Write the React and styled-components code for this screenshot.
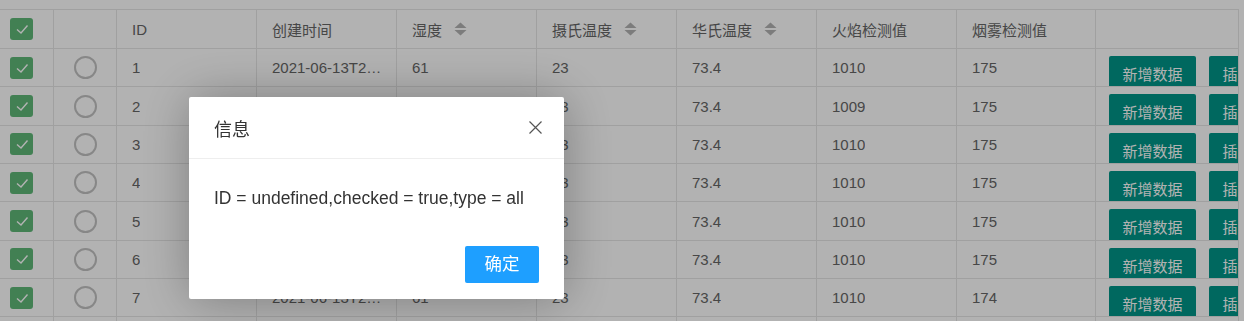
import React from "react";
import styled, {createGlobalStyle} from "styled-components";

const GlobalStyle = createGlobalStyle`
  html, body {
    margin: 0;
    padding: 0;
    background: #fff;
    overflow: hidden;
  }
  body {
    font-family: "Liberation Sans", "Noto Sans CJK SC", sans-serif;
  }
`

const columns = [
  {key: "id", title: "ID"},
  {key: "time", title: "创建时间", tight: true},
  {key: "hum", title: "湿度", sort: true},
  {key: "c", title: "摄氏温度", sort: true},
  {key: "f", title: "华氏温度", sort: true},
  {key: "fire", title: "火焰检测值"},
  {key: "smoke", title: "烟雾检测值"},
]

const fire = [1010, 1009, 1010, 1010, 1010, 1010, 1010, 1010]
const smoke = [175, 175, 175, 175, 175, 175, 174, 175]

const rows = fire.map((v, i) => ({
  id: i + 1,
  time: "2021-06-13T20:15:32",
  hum: 61,
  c: 23,
  f: 73.4,
  fire: v,
  smoke: smoke[i],
}))

const GRID = "54px 63px 140px 140px 140px 140px 140px 140px 139px 1fr"

const App = () => {
  return (
    <>
      <GlobalStyle/>
      <Page>
        <TableWrap>
          <Row header>
            <Cell center><CheckBox/></Cell>
            <Cell/>
            {columns.map(col => (
              <Cell key={col.key}>
                <span>{col.title}</span>
                {col.sort && <SortIcon/>}
              </Cell>
            ))}
            <Cell last/>
          </Row>
          {rows.map(row => (
            <Row key={row.id}>
              <Cell center><CheckBox/></Cell>
              <Cell center><Radio/></Cell>
              {columns.map(col => (
                <Cell key={col.key} tight={col.tight}><Ellipsis>{row[col.key]}</Ellipsis></Cell>
              ))}
              <ActionCell>
                <ActionBtn>新增数据</ActionBtn>
                <ActionBtn>插入数据</ActionBtn>
              </ActionCell>
            </Row>
          ))}
        </TableWrap>
      </Page>
      <Shade/>
      <Dialog>
        <DialogTitle>
          <span>信息</span>
          <Close>
            <svg width="13" height="13" viewBox="0 0 13 13">
              <path d="M0.5 0.5 L12.5 12.5 M12.5 0.5 L0.5 12.5" stroke="#555" strokeWidth="1.2" fill="none"/>
            </svg>
          </Close>
        </DialogTitle>
        <DialogBody>ID = undefined,checked = true,type = all</DialogBody>
        <DialogFooter>
          <OkBtn>确定</OkBtn>
        </DialogFooter>
      </Dialog>
    </>
  )
}

const CheckBox = () => (
  <Check>
    <svg width="22" height="22" viewBox="0 0 22 22">
      <path d="M6 11.5 L10 15 L16.5 7.5" stroke="#fff" strokeWidth="1.4" fill="none"/>
    </svg>
  </Check>
)

const SortIcon = () => (
  <Sort width="13" height="14" viewBox="0 0 13 14">
    <path d="M6.5 0.5 L12.5 6 L0.5 6 Z" fill="#b2b2b2"/>
    <path d="M0.5 8 L12.5 8 L6.5 13.5 Z" fill="#b2b2b2"/>
  </Sort>
)

const Page = styled.div`
  padding-top: 9px;
  width: 1244px;
  height: 321px;
  box-sizing: border-box;
  overflow: hidden;
`

const TableWrap = styled.div`
  width: 1239px;
  border-top: 1px solid #e6e6e6;
  border-right: 1px solid #e6e6e6;
  box-sizing: border-box;
  overflow: hidden;
`

const Row = styled.div`
  display: grid;
  grid-template-columns: ${GRID};
  height: ${p => (p.header ? "39px" : "38.35px")};
  border-bottom: 1px solid #e6e6e6;
  box-sizing: border-box;
  color: #666;
  font-size: 15px;
`

const Cell = styled.div`
  display: flex;
  align-items: center;
  justify-content: ${p => (p.center ? "center" : "flex-start")};
  padding: ${p => (p.center ? "0" : p.tight ? "0 9px 0 15px" : "0 15px")};
  border-right: ${p => (p.last ? "none" : "1px solid #e6e6e6")};
  box-sizing: border-box;
  min-width: 0;
  overflow: hidden;
  white-space: nowrap;
  &:first-child {
    justify-content: flex-start;
    padding-left: 10px;
  }
`

const Ellipsis = styled.span`
  display: block;
  overflow: hidden;
  text-overflow: ellipsis;
  white-space: nowrap;
`

const ActionCell = styled.div`
  display: flex;
  align-items: flex-start;
  gap: 13px;
  padding: 7px 0 0 13px;
  overflow: hidden;
  white-space: nowrap;
`

const ActionBtn = styled.div`
  flex: none;
  width: 87px;
  height: 38px;
  line-height: 38px;
  text-align: center;
  background: #009688;
  color: #fff;
  border-radius: 2px;
  font-size: 15px;
`

const Check = styled.div`
  width: 23px;
  height: 22px;
  border-radius: 3px;
  background: #5fb878;
  display: flex;
  align-items: center;
  justify-content: center;
  svg {
    display: block;
  }
`

const Radio = styled.div`
  width: 23px;
  height: 23px;
  border-radius: 50%;
  border: 2px solid #c2c2c2;
  box-sizing: border-box;
`

const Sort = styled.svg`
  margin-left: 12px;
  flex: none;
`

const Shade = styled.div`
  position: fixed;
  inset: 0;
  background: rgba(0, 0, 0, 0.3);
`

const Dialog = styled.div`
  position: fixed;
  left: 189px;
  top: 97px;
  width: 375px;
  height: 202px;
  background: #fff;
  border-radius: 2px;
  box-shadow: 1px 1px 50px rgba(0, 0, 0, 0.3);
  display: flex;
  flex-direction: column;
  color: #333;
`

const DialogTitle = styled.div`
  height: 62px;
  border-bottom: 1px solid #eee;
  box-sizing: border-box;
  display: flex;
  align-items: center;
  justify-content: space-between;
  padding: 0 22px 0 25px;
  font-size: 18px;
`

const Close = styled.div`
  display: flex;
  align-items: center;
`

const DialogBody = styled.div`
  padding: 27px 25px 0;
  height: 60px;
  line-height: 24px;
  font-size: 17.5px;
  white-space: nowrap;
`

const DialogFooter = styled.div`
  display: flex;
  justify-content: flex-end;
  padding: 0 25px;
`

const OkBtn = styled.div`
  width: 74px;
  height: 37px;
  line-height: 37px;
  text-align: center;
  background: #1e9fff;
  color: #fff;
  border-radius: 2px;
  font-size: 17.5px;
`

export default App
